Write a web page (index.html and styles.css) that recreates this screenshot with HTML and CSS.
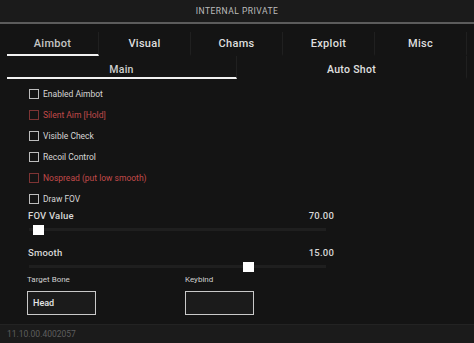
FILE: index.html
```html
<!DOCTYPE html>
<html lang="en">
<head>
    <meta charset="UTF-8">
    <meta name="viewport" content="width=device-width, initial-scale=1.0">
    <title>Internal Private</title>
    <link rel="stylesheet" href="styles.css">
</head>
<body>
    <div class="window">
        <!-- title bar -->
        <div class="titlebar">INTERNAL PRIVATE</div>

        <!-- main tabs -->
        <div class="tabs">
            <div class="tab active">Aimbot</div>
            <div class="tab">Visual</div>
            <div class="tab">Chams</div>
            <div class="tab">Exploit</div>
            <div class="tab">Misc</div>
        </div>

        <!-- sub tabs -->
        <div class="subtabs">
            <div class="subtab active">Main</div>
            <div class="subtab">Auto Shot</div>
        </div>

        <div class="content">
            <div class="checks">
                <div class="check"><span class="box"></span>Enabled Aimbot</div>
                <div class="check danger"><span class="box"></span>Silent Aim [Hold]</div>
                <div class="check"><span class="box"></span>Visible Check</div>
                <div class="check"><span class="box"></span>Recoil Control</div>
                <div class="check danger"><span class="box"></span>Nospread (put low smooth)</div>
                <div class="check"><span class="box"></span>Draw FOV</div>
            </div>

            <div class="slider">
                <div class="slider-head">
                    <span>FOV Value</span>
                    <span>70.00</span>
                </div>
                <div class="slider-area">
                    <div class="track"></div>
                    <div class="thumb" style="left: 4px"></div>
                </div>
            </div>

            <div class="slider">
                <div class="slider-head">
                    <span>Smooth</span>
                    <span>15.00</span>
                </div>
                <div class="slider-area">
                    <div class="track"></div>
                    <div class="thumb" style="left: 214px"></div>
                </div>
            </div>

            <div class="fields">
                <div class="field">
                    <div class="field-label">Target Bone</div>
                    <div class="field-box">Head</div>
                </div>
                <div class="field">
                    <div class="field-label">Keybind</div>
                    <div class="field-box"></div>
                </div>
            </div>
        </div>

        <div class="footer">11.10.00.4002057</div>
    </div>
</body>
</html>
```

FILE: styles.css
```css
* {
    margin: 0;
    padding: 0;
    box-sizing: border-box;
}

html, body {
    height: 100%;
    background: #141414;
    overflow: hidden;
}

body {
    font-family: Roboto, "Liberation Sans", sans-serif;
    color: #dcdcdc;
}

.window {
    display: flex;
    flex-direction: column;
    height: 100vh;
}

/* title bar */
.titlebar {
    height: 24px;
    background: #1b1b1b;
    border-bottom: 2px solid #5c5c5c;
    text-align: center;
    font-size: 8.5px;
    line-height: 22px;
    letter-spacing: 0.5px;
    color: #bdbdbd;
}

/* tabs */
.tabs {
    display: grid;
    grid-template-columns: repeat(5, 1fr);
    margin: 0 7px;
    padding-top: 8px;
}

.tab {
    height: 24px;
    padding-top: 2px;
    line-height: 20px;
    text-align: center;
    font-size: 11px;
    font-weight: 500;
    letter-spacing: 0.3px;
    color: #dedede;
    border-right: 1px solid #202020;
    border-bottom: 2px solid transparent;
}

.tab.active {
    color: #c4c4c4;
    border-bottom-color: #f2f2f2;
}

.subtabs {
    display: grid;
    grid-template-columns: 1fr 1fr;
    margin: 0 7px;
}

.subtab {
    height: 23px;
    padding-top: 6px;
    line-height: 15px;
    text-align: center;
    font-size: 10.5px;
    font-weight: 500;
    letter-spacing: 0.3px;
    color: #e0e0e0;
    border-right: 1px solid #202020;
    border-bottom: 2px solid transparent;
}

.subtab.active {
    color: #cfcfcf;
    border-bottom-color: #f2f2f2;
}

/* content */
.content {
    flex: 1;
    padding-left: 28px;
}

.checks {
    padding-top: 4px;
}

.check {
    display: flex;
    align-items: center;
    height: 21px;
    font-size: 8.5px;
    color: #d6d6d6;
}

.check .box {
    width: 10px;
    height: 10px;
    margin-left: 1px;
    margin-right: 4px;
    border: 1px solid #bdbdbd;
}

.check.danger {
    color: #c24a4a;
}

.check.danger .box {
    border-color: #7e3434;
}

.slider {
    width: 306px;
}

.slider + .slider {
    margin-top: 9px;
}

.slider-head {
    display: flex;
    justify-content: space-between;
    height: 12px;
    padding-top: 1px;
    line-height: 12px;
    font-size: 9.5px;
    font-weight: 500;
    letter-spacing: 0.2px;
    color: #d8d8d8;
}

.slider-area {
    position: relative;
    height: 15px;
    margin-top: 1px;
    margin-left: 1px;
    width: 297px;
}

.track {
    position: absolute;
    left: 0;
    right: 0;
    top: 6px;
    height: 3px;
    background: #1f1f1f;
}

.thumb {
    position: absolute;
    top: 3px;
    width: 11px;
    height: 10px;
    background: #ffffff;
}

.fields {
    display: flex;
    gap: 89px;
    margin-left: -1px;
}

.field-label {
    height: 12px;
    line-height: 12px;
    font-size: 8px;
    color: #cfcfcf;
}

.field-box {
    width: 69px;
    height: 24px;
    margin-top: 5px;
    padding-left: 5px;
    line-height: 22px;
    font-size: 9px;
    font-weight: 500;
    color: #e6e6e6;
    background: #1b1b1b;
    border: 1px solid #c9c9c9;
}

.footer {
    height: 19px;
    background: #1b1b1b;
    border-top: 1px solid #232323;
    padding-left: 7px;
    line-height: 18px;
    font-size: 8.5px;
    color: #5e5e5e;
}
```
